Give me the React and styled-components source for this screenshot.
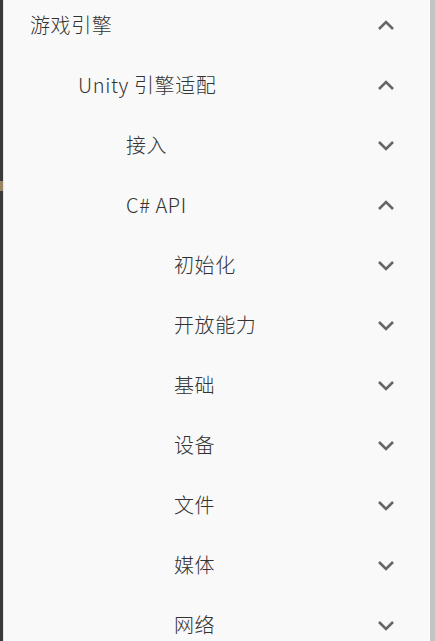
import React from "react";
import styled, { createGlobalStyle } from "styled-components";

const Global = createGlobalStyle`
  html, body { margin: 0; padding: 0; background: #f9f9f9; }
  body { overflow: hidden; font-family: "Noto Sans CJK SC", "Noto Sans", sans-serif; }
`;

const Frame = styled.div`
  display: flex;
  width: 435px;
  height: 641px;
  overflow: hidden;
`;

const LeftEdge = styled.div`
  width: 3px;
  flex: none;
  background: linear-gradient(
    to bottom,
    #3a3a3a 0px,
    #3a3a3a 181px,
    #9a8466 181px,
    #9a8466 191px,
    #3a3a3a 191px
  );
  border-right: 1px solid #e6e6e6;
`;

const Panel = styled.nav`
  flex: 1;
  background: #f9f9f9;
  overflow: hidden;
`;

const Scrollbar = styled.div`
  width: 5px;
  flex: none;
  background: #c4c4c4;
  border-left: 1px solid #fdfdfd;
`;

const List = styled.ul`
  list-style: none;
  margin: -5px 0 0 0;
  padding: 0;
`;

const Row = styled.li`
  height: 60px;
  display: flex;
  align-items: center;
  justify-content: space-between;
  padding-left: ${(p) => 26 + p.$level * 48}px;
  padding-right: 34px;
  box-sizing: border-box;
`;

const Label = styled.span`
  font-size: 20px;
  font-weight: 300;
  color: #333333;
  letter-spacing: 0.6px;
  line-height: 1;
  white-space: nowrap;
`;

const ChevronBox = styled.span`
  width: 18px;
  height: 12px;
  display: flex;
  align-items: center;
  justify-content: center;
`;

const Chevron = ({ up }) => (
  <ChevronBox>
    <svg width="18" height="12" viewBox="0 0 18 12">
      <polyline
        points={up ? "2,10 9,3 16,10" : "2,3 9,10 16,3"}
        fill="none"
        stroke="#666666"
        strokeWidth="2.6"
        strokeLinecap="butt"
        strokeLinejoin="miter"
      />
    </svg>
  </ChevronBox>
);

const items = [
  { label: "游戏引擎", level: 0, open: true },
  { label: "Unity 引擎适配", level: 1, open: true },
  { label: "接入", level: 2, open: false },
  { label: "C# API", level: 2, open: true },
  { label: "初始化", level: 3, open: false },
  { label: "开放能力", level: 3, open: false },
  { label: "基础", level: 3, open: false },
  { label: "设备", level: 3, open: false },
  { label: "文件", level: 3, open: false },
  { label: "媒体", level: 3, open: false },
  { label: "网络", level: 3, open: false },
];

export default function App() {
  return (
    <>
      <Global />
      <Frame>
        <LeftEdge />
        <Panel>
          <List>
            {items.map((it) => (
              <Row key={it.label} $level={it.level}>
                <Label>{it.label}</Label>
                <Chevron up={it.open} />
              </Row>
            ))}
          </List>
        </Panel>
        <Scrollbar />
      </Frame>
    </>
  );
}
